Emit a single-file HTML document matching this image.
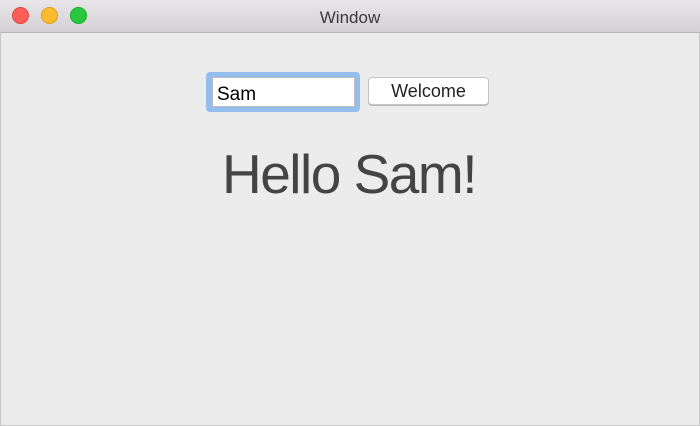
<!DOCTYPE html>
<html><head><style>
body{margin:0;width:700px;height:426px;overflow:hidden;background:#ececec;font-family:"Liberation Sans",sans-serif;position:relative}
.tb{position:absolute;left:0;top:0;width:700px;height:32px;background:linear-gradient(#e8e6e8,#d3d1d3);border-bottom:1px solid #b8b8b8;text-align:center;line-height:35px;font-size:17px;color:#3a3a3a}
.c{position:absolute;top:7px;width:17px;height:17px;border-radius:50%;box-sizing:border-box}
.frame{position:absolute;left:0;top:33px;width:698px;height:392px;border:1px solid #c8c8c8;border-top:none}
.ring{position:absolute;left:206px;top:72px;width:154px;height:40px;background:#94bdf0;border-radius:4px}
.field{position:absolute;left:212px;top:77px;width:143px;height:30px;background:#fff;border:1px solid #bcbcbc;box-sizing:border-box;font-size:19px;line-height:34px;padding-left:4px;color:#000}
.btn{position:absolute;left:368px;top:77px;width:121px;height:28px;background:#fff;border:1px solid #c4c4c4;border-radius:4px;box-sizing:border-box;text-align:center;font-size:18px;line-height:27px;color:#222;box-shadow:0 1px 0 #bbb}
.hello{position:absolute;left:214px;top:138px;width:270px;text-align:center;font-size:55px;font-weight:300;color:#444;letter-spacing:-1.5px;line-height:72px}
</style></head><body>
<div class="tb">Window</div>
<div class="c" style="left:12px;background:#fc5f57;border:1px solid #e0443e"></div>
<div class="c" style="left:41px;background:#fdbc2e;border:1px solid #dea123"></div>
<div class="c" style="left:70px;background:#29c840;border:1px solid #1aab29"></div>
<div class="frame"></div>
<div class="ring"></div>
<div class="field">Sam</div>
<div class="btn">Welcome</div>
<div class="hello">Hello Sam!</div>
</body></html>
